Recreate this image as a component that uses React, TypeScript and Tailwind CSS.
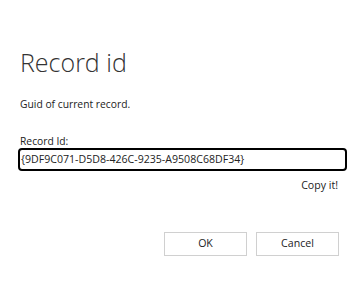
import React from 'react';

const App: React.FC = () => {
  const recordId = '{9DF9C071-D5D8-426C-9235-A9508C68DF34}';

  return (
    <div
      className="w-[358px] h-[297px] bg-white text-[#222] flex flex-col"
      style={{ fontFamily: '"Segoe UI", "Open Sans", "Noto Sans", sans-serif' }}
    >
      <div className="pl-[18px] pr-[11px] pt-[42px] flex-1 flex flex-col">
        <h1 className="text-[25px] leading-[40px] font-light text-[#333] ml-[2px]">Record id</h1>
        <p className="mt-[15px] text-[10.3px] leading-[15px] ml-[2px]">Guid of current record.</p>

        <label className="mt-[22px] text-[10.3px] leading-[15px] ml-[2px]">Record Id:</label>
        <div className="-mt-px h-[23px] border-2 border-black rounded-[4px] flex items-center px-[1px] text-[10.6px] leading-[15px]">
          {recordId}
        </div>
        <div className="mt-[7px] flex justify-end pr-[9px]">
          <button className="text-[10.6px] leading-[15px] text-[#222]">Copy it!</button>
        </div>
      </div>

      <div className="flex justify-end gap-[9px] pr-[19px] pb-[41px]">
        <button className="w-[83px] h-[24px] border border-[#d0d0d0] bg-white text-[10.6px] text-[#222]">OK</button>
        <button className="w-[83px] h-[24px] border border-[#d0d0d0] bg-white text-[10.6px] text-[#222]">Cancel</button>
      </div>
    </div>
  );
};

export default App;
